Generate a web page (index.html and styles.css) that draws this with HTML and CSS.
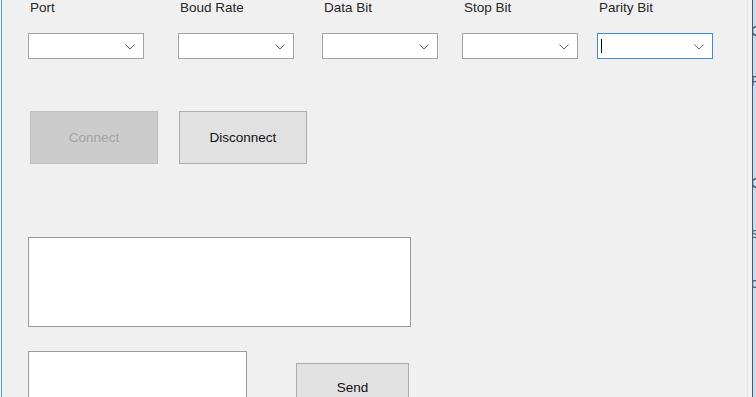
FILE: index.html
```html
<!DOCTYPE html>
<html>
<head>
<meta charset="utf-8">
<link rel="stylesheet" href="styles.css">
</head>
<body>
<div class="window">
  <div class="edge-left"></div>
  <div class="form">
    <div class="settings">
      <div class="field">
        <div class="label">Port</div>
        <div class="combo"><span class="value"></span><svg class="chev" width="10" height="6" viewBox="0 0 10 6"><path d="M0.5 0.5 L5 5 L9.5 0.5" fill="none" stroke="#606060" stroke-width="1"/></svg></div>
      </div>
      <div class="field">
        <div class="label">Boud Rate</div>
        <div class="combo"><span class="value"></span><svg class="chev" width="10" height="6" viewBox="0 0 10 6"><path d="M0.5 0.5 L5 5 L9.5 0.5" fill="none" stroke="#606060" stroke-width="1"/></svg></div>
      </div>
      <div class="field">
        <div class="label">Data Bit</div>
        <div class="combo"><span class="value"></span><svg class="chev" width="10" height="6" viewBox="0 0 10 6"><path d="M0.5 0.5 L5 5 L9.5 0.5" fill="none" stroke="#606060" stroke-width="1"/></svg></div>
      </div>
      <div class="field">
        <div class="label">Stop Bit</div>
        <div class="combo"><span class="value"></span><svg class="chev" width="10" height="6" viewBox="0 0 10 6"><path d="M0.5 0.5 L5 5 L9.5 0.5" fill="none" stroke="#606060" stroke-width="1"/></svg></div>
      </div>
      <div class="field">
        <div class="label">Parity Bit</div>
        <div class="combo focused"><span class="value"><span class="caret"></span></span><svg class="chev" width="10" height="6" viewBox="0 0 10 6"><path d="M0.5 0.5 L5 5 L9.5 0.5" fill="none" stroke="#606060" stroke-width="1"/></svg></div>
      </div>
    </div>

    <div class="actions">
      <div class="btn disabled">Connect</div>
      <div class="btn">Disconnect</div>
    </div>

    <div class="output"></div>

    <div class="send-row">
      <div class="input"></div>
      <div class="btn send">Send</div>
    </div>
  </div>
  <div class="edge-right">
    <div class="sep"></div>
    <div class="frame">
      <div class="frag f1">C</div>
      <div class="frag f2">F</div>
      <div class="frag f3">C</div>
      <div class="frag f4">s</div>
      <div class="frag f5">c</div>
    </div>
  </div>
</div>
</body>
</html>
```

FILE: styles.css
```css
html, body {
  margin: 0;
  padding: 0;
  background: #f0f0f0;
  overflow: hidden;
}
body {
  font-family: "Liberation Sans", Arial, sans-serif;
  font-size: 13.5px;
  color: #262626;
}
.window {
  display: flex;
  width: 756px;
  height: 397px;
  overflow: hidden;
  background: #f0f0f0;
}
.edge-left {
  width: 1px;
  border-left: 1px solid #eef3f8;
  background: #5a9fdc;
  flex: none;
}
.form {
  flex: none;
  width: 745px;
  padding-left: 26px;
  box-sizing: border-box;
}
.settings {
  display: grid;
  grid-template-columns: 150px 144px 140px 135px 116px;
}
.label {
  height: 16px;
  line-height: 16px;
  padding-left: 2px;
  margin-bottom: 17px;
  white-space: nowrap;
}
.combo {
  width: 116px;
  height: 26px;
  box-sizing: border-box;
  background: #fff;
  border: 1px solid #a3a3a3;
  display: flex;
  align-items: center;
  padding: 0 8px 0 3px;
}
.combo .value {
  flex: 1;
  display: flex;
  align-items: center;
}
.combo.focused {
  border-color: #3c8fd8;
}
.caret {
  width: 1px;
  height: 14px;
  background: #000;
}
.chev {
  display: block;
  margin-top: 1px;
}
.actions {
  display: flex;
  gap: 21px;
  margin-top: 52px;
  padding-left: 2px;
}
.btn {
  width: 128px;
  height: 53px;
  box-sizing: border-box;
  background: #e1e1e1;
  border: 1px solid #adadad;
  display: flex;
  align-items: center;
  justify-content: center;
  color: #111;
}
.btn.disabled {
  background: #cccccc;
  border-color: #bfbfbf;
  color: #a3a3a3;
}
.output {
  margin-top: 73px;
  width: 383px;
  height: 90px;
  box-sizing: border-box;
  background: #fff;
  border: 1px solid #9a9a9a;
}
.send-row {
  display: flex;
  align-items: flex-start;
  gap: 49px;
  margin-top: 24px;
}
.input {
  width: 219px;
  height: 60px;
  box-sizing: border-box;
  background: #fff;
  border: 1px solid #9a9a9a;
}
.btn.send {
  width: 113px;
  height: 48px;
  margin-top: 12px;
}
.edge-right {
  flex: 1;
  display: flex;
}
.sep {
  width: 1px;
  background: #ece4e4;
  margin-right: 4px;
}
.frame {
  flex: 1;
  border-left: 1px solid #2f5d8c;
  background: #cfdbe7;
  overflow: hidden;
  display: flex;
  flex-direction: column;
  font-size: 14px;
  color: #555;
  line-height: 14px;
}
.frag {
  margin-left: -2px;
}
.f1 { margin-top: 24px; }
.f2 { margin-top: 36px; }
.f3 { margin-top: 88px; }
.f4 { margin-top: 36px; }
.f5 { margin-top: 36px; }
```
